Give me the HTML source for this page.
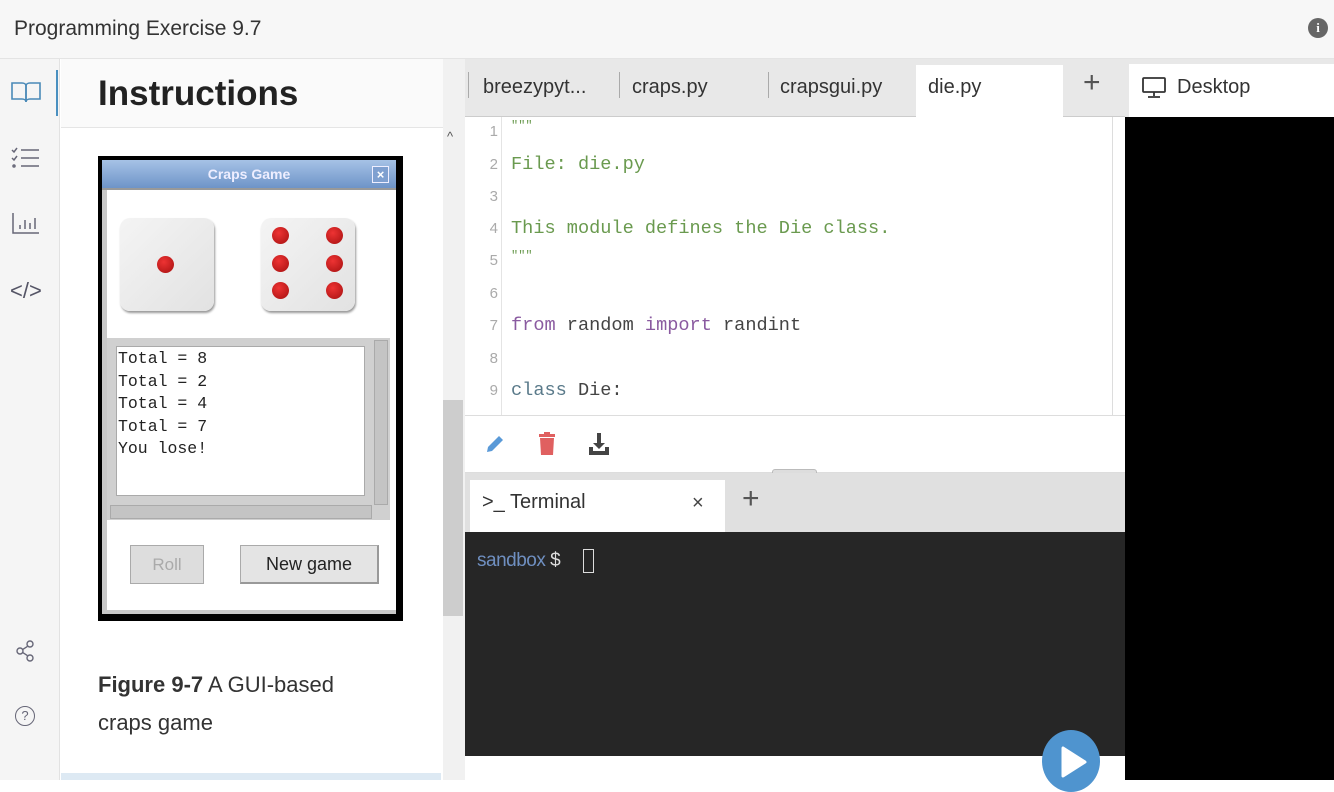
<!DOCTYPE html>
<html><head><meta charset="utf-8"><style>
*{margin:0;padding:0;box-sizing:border-box}
body{width:1334px;height:780px;overflow:hidden;position:relative;background:#fff;font-family:"Liberation Sans",sans-serif}
.a{position:absolute}
.mono{font-family:"Liberation Mono","DejaVu Sans Mono",monospace}
.code div{position:absolute;left:0;height:22px;font-size:18.6px;white-space:pre}
.code .n{width:18px;text-align:right;color:#aaa;font-size:15px;font-family:"Liberation Sans",sans-serif}
.code .t{left:31px}
.g{color:#6a9a4f}.k{color:#8a5aa0}.d{color:#444}
.dot{position:absolute;width:17px;height:17px;border-radius:50%;background:radial-gradient(circle at 40% 35%,#e33,#a51010)}
.die{position:absolute;width:94px;height:93px;border-radius:10px;background:linear-gradient(135deg,#f4f4f4,#e2e2e2);box-shadow:1px 2px 2px #999}
</style></head><body>
<div class="a" style="left:0;top:0;width:1334px;height:59px;background:#f7f7f7;border-bottom:1px solid #e4e4e4"></div>
<div class="a" style="left:14px;top:17px;font-size:21px;color:#333">Programming Exercise 9.7</div>
<div class="a" style="left:1308px;top:18px;width:20px;height:20px;border-radius:50%;background:#666;color:#fff;font-size:13px;font-weight:bold;text-align:center;line-height:20px;font-family:'Liberation Serif',serif">i</div>
<div class="a" style="left:0;top:59px;width:60px;height:721px;background:#f5f5f5;border-right:1px solid #e2e2e2"></div>
<div class="a" style="left:56px;top:70px;width:2px;height:46px;background:#4a90c0"></div>
<svg class="a" style="left:10px;top:80px" width="32" height="24" viewBox="0 0 32 24" fill="none" stroke="#4a8ab8" stroke-width="1.6"><path d="M2 3h10c2 0 4 1 4 3v16c0-2-2-3-4-3H2z"/><path d="M30 3H20c-2 0-4 1-4 3v16c0-2 2-3 4-3h10z"/></svg>
<svg class="a" style="left:11px;top:146px" width="30" height="24" viewBox="0 0 30 24" fill="none" stroke="#667" stroke-width="1.5"><path d="M1 4l2 2 3-4M1 12l2 2 3-4"/><circle cx="3" cy="20" r="1"/><path d="M10 4h18M10 12h18M10 20h18"/></svg>
<svg class="a" style="left:11px;top:211px" width="30" height="24" viewBox="0 0 30 24" fill="none" stroke="#667" stroke-width="1.5"><path d="M2 2v20h26M9 18v-4M14 18v-9M19 18v-6M24 18v-11"/></svg>
<div class="a" style="left:10px;top:278px;font-size:22px;color:#556">&lt;/&gt;</div>
<svg class="a" style="left:15px;top:640px" width="22" height="22" viewBox="0 0 22 22" fill="none" stroke="#667" stroke-width="1.4"><circle cx="15" cy="4" r="3"/><circle cx="5" cy="11" r="3"/><circle cx="15" cy="18" r="3"/><path d="M7.6 9.6l4.8-3.2M7.6 12.4l4.8 3.2"/></svg>
<div class="a" style="left:15px;top:706px;width:20px;height:20px;border:1.5px solid #667;border-radius:50%;font-size:13px;color:#667;text-align:center;line-height:17px">?</div>
<div class="a" style="left:61px;top:59px;width:382px;height:69px;background:#fafafa;border-bottom:1px solid #e5e5e5"></div>
<div class="a" style="left:98px;top:74px;font-size:35px;font-weight:bold;color:#222">Instructions</div>
<div class="a" style="left:443px;top:59px;width:22px;height:721px;background:#f1f1f1"></div>
<div class="a" style="left:443px;top:400px;width:20px;height:216px;background:#cdcdcd"></div>
<div class="a" style="left:447px;top:129px;font-size:13px;color:#555">^</div>
<div class="a" style="left:61px;top:773px;width:380px;height:7px;background:#dde9f3"></div>
<div class="a" style="left:98px;top:156px;width:305px;height:465px;background:#000"></div>
<div class="a" style="left:102px;top:160px;width:294px;height:454px;background:#fff;border-left:5px solid #c8c8c8;border-bottom:4px solid #c8c8c8"></div>
<div class="a" style="left:102px;top:160px;width:294px;height:30px;background:linear-gradient(#a6c2e6,#6e94c8);border-bottom:2px solid #999"></div>
<div class="a" style="left:102px;top:166px;width:294px;text-align:center;color:#eef;font-size:14px;font-weight:bold">Craps Game</div>
<div class="a" style="left:372px;top:166px;width:17px;height:17px;border:1px solid #eef;background:#7fa0d0;color:#fff;font-size:13px;font-weight:bold;text-align:center;line-height:15px">×</div>
<div class="die" style="left:120px;top:218px"></div>
<div class="dot" style="left:157px;top:256px"></div>
<div class="die" style="left:261px;top:218px"></div>
<div class="dot" style="left:272px;top:227px"></div><div class="dot" style="left:326px;top:227px"></div>
<div class="dot" style="left:272px;top:255px"></div><div class="dot" style="left:326px;top:255px"></div>
<div class="dot" style="left:272px;top:282px"></div><div class="dot" style="left:326px;top:282px"></div>
<div class="a" style="left:107px;top:338px;width:283px;height:182px;background:#d0d0d0"></div>
<div class="a" style="left:116px;top:346px;width:249px;height:150px;background:#fff;border:1px solid #aaa"></div>
<div class="a mono" style="left:118px;top:348px;font-size:16.5px;line-height:22.5px;color:#222">Total = 8<br>Total = 2<br>Total = 4<br>Total = 7<br>You lose!</div>
<div class="a" style="left:374px;top:340px;width:14px;height:165px;background:#c4c4c4;border:1px solid #aaa"></div>
<div class="a" style="left:110px;top:505px;width:262px;height:14px;background:#c4c4c4;border:1px solid #aaa"></div>
<div class="a" style="left:130px;top:545px;width:74px;height:39px;background:#ddd;border:1px solid #aaa;color:#aaa;font-size:17px;text-align:center;line-height:37px">Roll</div>
<div class="a" style="left:240px;top:545px;width:139px;height:39px;background:#e4e4e4;border:1px solid #aaa;border-right:2px solid #999;border-bottom:2px solid #999;color:#222;font-size:18px;text-align:center;line-height:37px">New game</div>
<div class="a" style="left:98px;top:666px;font-size:22px;color:#333;line-height:38px"><b>Figure 9-7</b> A GUI-based<br>craps game</div>
<div class="a" style="left:465px;top:59px;width:660px;height:58px;background:#e8e8e8;border-bottom:1px solid #ccc"></div>
<div class="a" style="left:468px;top:72px;width:1px;height:26px;background:#aaa"></div>
<div class="a" style="left:619px;top:72px;width:1px;height:26px;background:#aaa"></div>
<div class="a" style="left:768px;top:72px;width:1px;height:26px;background:#aaa"></div>
<div class="a" style="left:916px;top:65px;width:147px;height:52px;background:#fff"></div>
<div class="a" style="left:483px;top:76px;font-size:20px;color:#333">breezypyt...</div>
<div class="a" style="left:632px;top:76px;font-size:20px;color:#333">craps.py</div>
<div class="a" style="left:780px;top:76px;font-size:20px;color:#333">crapsgui.py</div>
<div class="a" style="left:928px;top:76px;font-size:20px;color:#333">die.py</div>
<div class="a" style="left:1083px;top:66px;font-size:30px;color:#555">+</div>
<div class="a" style="left:465px;top:117px;width:648px;height:298px;background:#fff;border-right:1px solid #ddd"></div>
<div class="a" style="left:501px;top:117px;width:1px;height:298px;background:#e4e4e4"></div>
<div class="a code mono" style="left:480px;top:120px;width:630px;height:292px">
<div class="n" style="top:3px">1</div><div class="t g" style="top:-1px;font-size:12px">"""</div>
<div class="n" style="top:36px">2</div><div class="t g" style="top:34px">File: die.py</div>
<div class="n" style="top:68px">3</div>
<div class="n" style="top:100px">4</div><div class="t g" style="top:98px">This module defines the Die class.</div>
<div class="n" style="top:132px">5</div><div class="t g" style="top:129px;font-size:12px">"""</div>
<div class="n" style="top:165px">6</div>
<div class="n" style="top:197px">7</div><div class="t d" style="top:195px"><span class="k">from</span> random <span class="k">import</span> randint</div>
<div class="n" style="top:230px">8</div>
<div class="n" style="top:262px">9</div><div class="t" style="top:260px"><span style="color:#5a7a8a">class</span><span class="d"> Die:</span></div>
</div>
<div class="a" style="left:465px;top:415px;width:664px;height:58px;background:#fff;border-top:1px solid #ddd;border-bottom:1px solid #ddd"></div>
<svg class="a" style="left:484px;top:433px" width="22" height="22" viewBox="0 0 22 22"><path d="M3 19l1-5L15 3l4 4L8 18z" fill="#5a9ad8"/></svg>
<svg class="a" style="left:537px;top:432px" width="20" height="24" viewBox="0 0 20 24"><rect x="2" y="2" width="16" height="3" fill="#e06060"/><rect x="7" y="0" width="6" height="3" fill="#e06060"/><path d="M3 6h14l-1 17H4z" fill="#e06060"/></svg>
<svg class="a" style="left:588px;top:432px" width="22" height="24" viewBox="0 0 22 24"><path d="M9 1h4v10h4l-6 6-6-6h4z" fill="#444"/><path d="M1 15h4v4h12v-4h4v8H1z" fill="#444"/></svg>
<div class="a" style="left:772px;top:469px;width:45px;height:8px;background:#ddd;border:1px solid #bbb;border-radius:3px"></div>
<div class="a" style="left:465px;top:473px;width:660px;height:59px;background:#e0e0e0"></div>
<div class="a" style="left:470px;top:480px;width:255px;height:52px;background:#fff"></div>
<div class="a" style="left:482px;top:491px;font-size:20px;color:#333">&gt;_ Terminal</div>
<div class="a" style="left:692px;top:492px;font-size:20px;color:#444">×</div>
<div class="a" style="left:742px;top:482px;font-size:30px;color:#555">+</div>
<div class="a" style="left:465px;top:532px;width:660px;height:224px;background:#262626"></div>
<div class="a" style="left:477px;top:550px;font-size:19px;color:#6f8fc0;letter-spacing:-0.5px">sandbox <span style="color:#ddd">$</span></div>
<div class="a" style="left:583px;top:549px;width:11px;height:24px;border:1.5px solid #ddd"></div>
<div class="a" style="left:1042px;top:730px;width:58px;height:62px;border-radius:50%;background:#4f94cf"></div>
<svg class="a" style="left:1060px;top:745px" width="28" height="34" viewBox="0 0 28 34"><path d="M3 3v28l22-14z" fill="#fff" stroke="#fff" stroke-width="3" stroke-linejoin="round"/></svg>
<div class="a" style="left:1125px;top:59px;width:209px;height:721px;background:#000"></div>
<div class="a" style="left:1125px;top:59px;width:209px;height:58px;background:#e8e8e8"></div>
<div class="a" style="left:1129px;top:64px;width:205px;height:53px;background:#fff"></div>
<svg class="a" style="left:1141px;top:76px" width="26" height="24" viewBox="0 0 26 24" fill="none" stroke="#333" stroke-width="1.8"><rect x="2" y="2" width="22" height="14" rx="1"/><path d="M13 16v4M7 21h12"/></svg>
<div class="a" style="left:1177px;top:76px;font-size:20px;color:#333">Desktop</div>
</body></html>
